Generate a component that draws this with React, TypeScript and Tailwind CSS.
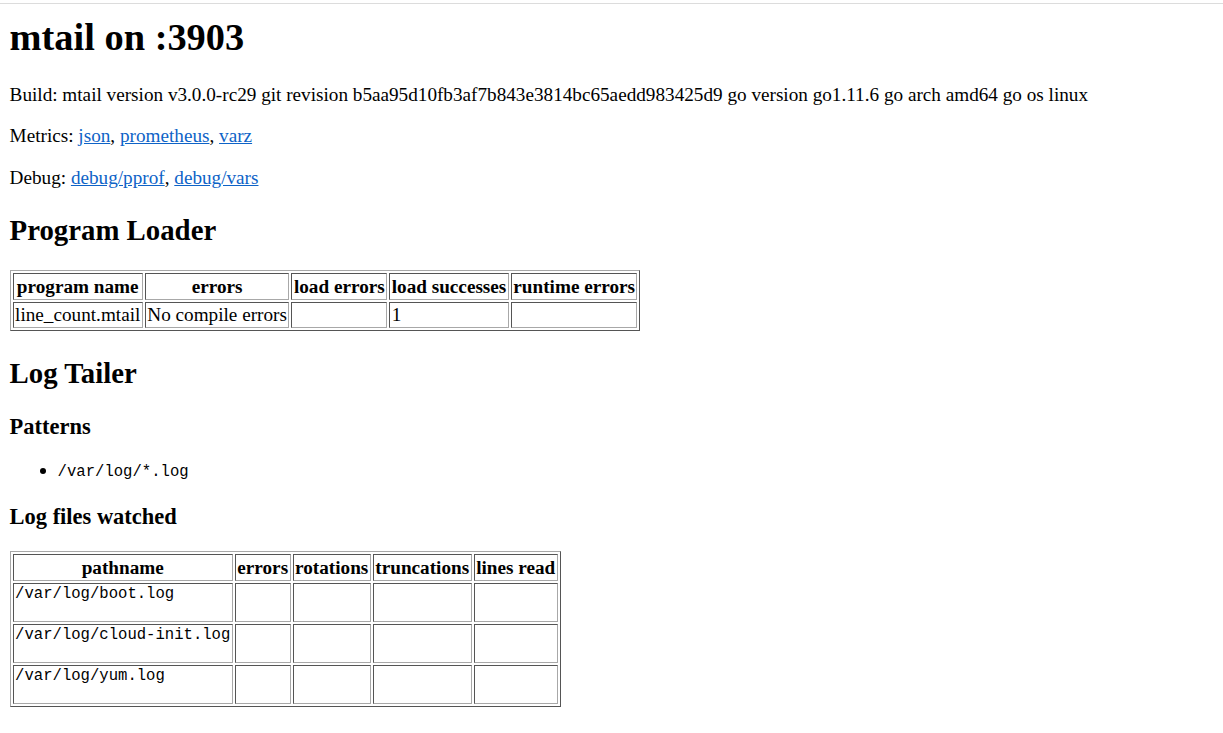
const cell =
  "py-[1.2px] px-[1.5px] border border-solid border-t-[#555] border-l-[#555] border-r-[#a8a8a8] border-b-[#a8a8a8]";
const table =
  "border-separate border-spacing-[2.4px] border border-solid border-t-[#a8a8a8] border-l-[#a8a8a8] border-r-[#555] border-b-[#555] text-[19.2px] leading-[normal]";

const links = (items: string[]) =>
  items.map((l, i) => (
    <span key={l}>
      <a href="#" className="text-[#0e63c7] underline">
        {l}
      </a>
      {i < items.length - 1 ? ", " : ""}
    </span>
  ));

const logFiles = ["/var/log/boot.log", "/var/log/cloud-init.log", "/var/log/yum.log"];

export default function App() {
  return (
    <div className="min-h-screen bg-white text-black font-['Liberation_Serif',serif]">
      <div className="pt-[3px]">
        <div className="h-px bg-[#dcdcdc]" />
      </div>
      <div className="flow-root px-[9.6px] text-[19.2px] leading-[normal]">
        <h1 className="mt-[10.5px] mb-[25.7px] text-[38.4px] font-bold leading-[normal]">mtail on :3903</h1>
        <p className="my-[19.2px]">
          Build: mtail version v3.0.0-rc29 git revision b5aa95d10fb3af7b843e3814bc65aedd983425d9 go version
          go1.11.6 go arch amd64 go os linux
        </p>
        <p className="my-[19.2px]">Metrics: {links(["json", "prometheus", "varz"])}</p>
        <p className="my-[19.2px]">Debug: {links(["debug/pprof", "debug/vars"])}</p>

        <h2 className="mt-[25.9px] mb-[22.9px] text-[28.8px] font-bold leading-[normal]">Program Loader</h2>
        <table className={table}>
          <thead>
            <tr>
              {["program name", "errors", "load errors", "load successes", "runtime errors"].map((h) => (
                <th key={h} className={`${cell} font-bold text-center`}>
                  {h}
                </th>
              ))}
            </tr>
          </thead>
          <tbody>
            <tr>
              <td className={cell}>line_count.mtail</td>
              <td className={cell}>No compile errors</td>
              <td className={cell}></td>
              <td className={cell}>1</td>
              <td className={cell}></td>
            </tr>
          </tbody>
        </table>

        <h2 className="mt-[25.9px] mb-[23.9px] text-[28.8px] font-bold leading-[normal]">Log Tailer</h2>
        <h3 className="mt-[23.5px] mb-[18.5px] text-[22.46px] font-bold leading-[normal]">Patterns</h3>
        <ul className="mt-[19.2px] mb-[17.4px] list-disc pl-[48px]">
          <li>
            <code className="font-['Liberation_Mono',monospace] text-[15.6px]">/var/log/*.log</code>
          </li>
        </ul>
        <h3 className="mt-[22.46px] mb-[21.9px] text-[22.46px] font-bold leading-[normal]">Log files watched</h3>
        <table className={`${table} mb-[20px]`}>
          <thead>
            <tr>
              {["pathname", "errors", "rotations", "truncations", "lines read"].map((h) => (
                <th key={h} className={`${cell} font-bold text-center`}>
                  {h}
                </th>
              ))}
            </tr>
          </thead>
          <tbody>
            {logFiles.map((f) => (
              <tr key={f} className="h-[39px]">
                <td className={`${cell} align-top`}>
                  <div className="font-['Liberation_Mono',monospace] text-[15.6px] leading-[normal]">{f}</div>
                </td>
                <td className={cell}></td>
                <td className={cell}></td>
                <td className={cell}></td>
                <td className={cell}></td>
              </tr>
            ))}
          </tbody>
        </table>
      </div>
    </div>
  );
}
